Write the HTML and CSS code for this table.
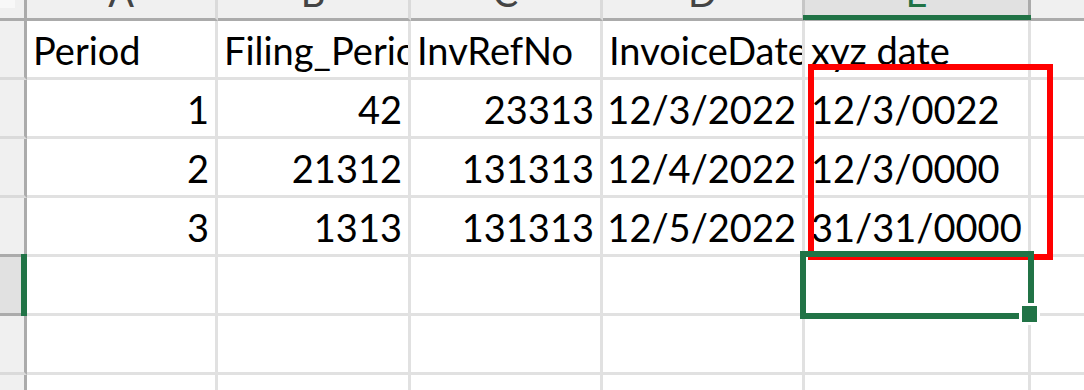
FILE: index.html
```html
<!DOCTYPE html>
<html lang="en">
<head>
<meta charset="utf-8">
<title>Sheet</title>
<link rel="stylesheet" href="styles.css">
</head>
<body>
<div class="sheet">
  <div class="grid">
    <div class="corner"><span class="corner-mark"></span></div>
    <div class="colhead"><span>A</span></div>
    <div class="colhead"><span>B</span></div>
    <div class="colhead"><span>C</span></div>
    <div class="colhead colhead-before-sel"><span>D</span></div>
    <div class="colhead colhead-sel"><span>E</span></div>
    <div class="colhead colhead-last"></div>

    <div class="rowhead"></div>
    <div class="cell">Period</div>
    <div class="cell">Filing_Period</div>
    <div class="cell">InvRefNo</div>
    <div class="cell">InvoiceDate</div>
    <div class="cell">xyz date</div>
    <div class="cell cell-last"></div>

    <div class="rowhead"></div>
    <div class="cell num">1</div>
    <div class="cell num">42</div>
    <div class="cell num">23313</div>
    <div class="cell num">12/3/2022</div>
    <div class="cell">12/3/0022</div>
    <div class="cell cell-last"></div>

    <div class="rowhead"></div>
    <div class="cell num">2</div>
    <div class="cell num">21312</div>
    <div class="cell num">131313</div>
    <div class="cell num">12/4/2022</div>
    <div class="cell">12/3/0000</div>
    <div class="cell cell-last"></div>

    <div class="rowhead rowhead-before-sel"></div>
    <div class="cell num">3</div>
    <div class="cell num">1313</div>
    <div class="cell num">131313</div>
    <div class="cell num">12/5/2022</div>
    <div class="cell">31/31/0000</div>
    <div class="cell cell-last"></div>

    <div class="rowhead rowhead-sel"></div>
    <div class="cell"></div>
    <div class="cell"></div>
    <div class="cell"></div>
    <div class="cell"></div>
    <div class="cell"></div>
    <div class="cell cell-last"></div>

    <div class="rowhead"></div>
    <div class="cell"></div>
    <div class="cell"></div>
    <div class="cell"></div>
    <div class="cell"></div>
    <div class="cell"></div>
    <div class="cell cell-last"></div>

    <div class="rowhead"></div>
    <div class="cell"></div>
    <div class="cell"></div>
    <div class="cell"></div>
    <div class="cell"></div>
    <div class="cell"></div>
    <div class="cell cell-last"></div>

    <div class="rowhead"></div>
    <div class="cell"></div>
    <div class="cell"></div>
    <div class="cell"></div>
    <div class="cell"></div>
    <div class="cell"></div>
    <div class="cell cell-last"></div>
  </div>

  <div class="annot-red"></div>
  <div class="selection"></div>
  <div class="fill-handle"></div>
</div>
</body>
</html>
```

FILE: styles.css
```css
html, body {
  margin: 0;
  padding: 0;
  background: #ffffff;
}

body {
  width: 1084px;
  height: 390px;
  overflow: hidden;
  font-family: Lato, "Open Sans", sans-serif;
}

.sheet {
  position: relative;
  width: 1084px;
  height: 390px;
  overflow: hidden;
}

.grid {
  display: grid;
  grid-template-columns: 27px 191px 193px 192px 202px 226px 1fr;
  grid-template-rows: 21px repeat(7, 59px);
}

.grid > div {
  box-sizing: border-box;
  overflow: hidden;
  white-space: nowrap;
}

/* corner */
.corner {
  background: #f0f0f0;
  border-right: 3px solid #ababab;
  border-bottom: 3px solid #ababab;
  position: relative;
}
.corner-mark {
  position: absolute;
  left: 0;
  top: 0;
  width: 15px;
  height: 8px;
  background: #f8f8f8;
}

/* column headers */
.colhead {
  position: relative;
  background: #f0f0f0;
  border-right: 3px solid #dadada;
  border-bottom: 3px solid #ababab;
  text-align: center;
  color: #444444;
  font-size: 38px;
  line-height: 38px;
}
.colhead span {
  display: block;
  margin-top: -27px;
}
.colhead-before-sel {
  border-right-color: #c6c6c6;
}
.colhead-sel {
  background: #e1e1e1;
  border-right-color: #ababab;
  color: #217346;
  overflow: visible !important;
}
.colhead-sel::after {
  content: "";
  position: absolute;
  left: -2px;
  right: -3px;
  bottom: -2px;
  height: 5px;
  background: #217346;
}
.colhead-last {
  border-right: none;
}

/* row headers */
.rowhead {
  position: relative;
  background: #f0f0f0;
  border-right: 3px solid #ababab;
  border-bottom: 3px solid #dadada;
}
.rowhead-before-sel {
  border-bottom-color: #ababab;
}
.rowhead-sel {
  background: #e1e1e1;
  border-bottom-color: #ababab;
  overflow: visible !important;
}
.rowhead-sel::after {
  content: "";
  position: absolute;
  right: -3px;
  top: -3px;
  bottom: -3px;
  width: 6px;
  background: #217346;
}

/* cells */
.cell {
  display: flex;
  align-items: flex-end;
  border-right: 3px solid #e1e1e1;
  border-bottom: 3px solid #e1e1e1;
  padding: 0 6px 8px 6px;
  font-size: 38px;
  line-height: 38px;
  color: #000000;
}
.cell.num {
  justify-content: flex-end;
}
.cell-last {
  border-right: none;
}

/* overlays */
.annot-red {
  position: absolute;
  left: 808px;
  top: 64px;
  width: 245px;
  height: 196px;
  box-sizing: border-box;
  border: 6px solid #ff0000;
}

.selection {
  position: absolute;
  left: 800px;
  top: 251px;
  width: 234px;
  height: 68px;
  box-sizing: border-box;
  border: 6px solid #217346;
}

.fill-handle {
  position: absolute;
  left: 1019px;
  top: 303px;
  width: 21px;
  height: 22px;
  box-sizing: border-box;
  background: #217346;
  border: 3px solid #ffffff;
}
```
